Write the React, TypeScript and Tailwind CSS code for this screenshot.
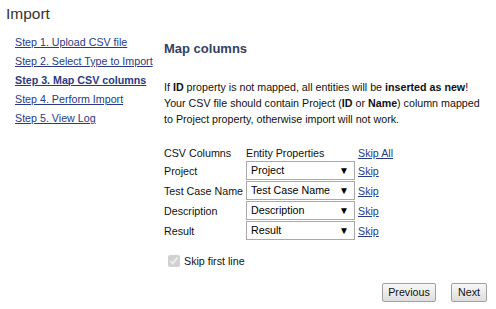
const steps = [
  { label: "Step 1. Upload CSV file" },
  { label: "Step 2. Select Type to Import" },
  { label: "Step 3. Map CSV columns", current: true },
  { label: "Step 4. Perform Import" },
  { label: "Step 5. View Log" },
];

const rows = [
  { column: "Project", property: "Project" },
  { column: "Test Case Name", property: "Test Case Name" },
  { column: "Description", property: "Description" },
  { column: "Result", property: "Result" },
];

function FakeSelect({ value }: { value: string }) {
  return (
    <div className="flex h-[19px] w-[109px] items-center justify-between border border-[#a9a9a9] bg-white pl-[4px] pr-[5px] text-black">
      <span>{value}</span>
      <span className="text-[10px] leading-none">▼</span>
    </div>
  );
}

export default function App() {
  return (
    <div className="h-[309px] w-[496px] overflow-hidden whitespace-nowrap bg-white font-['Liberation_Sans',Arial,sans-serif] text-[10.7px] text-[#111]">
      <h1 className="h-[24px] pl-[6px] pt-[4px] text-[15.5px] leading-[20px] text-[#333]">Import</h1>

      <div className="flex">
        <ul className="w-[164px] shrink-0 pl-[15px] pt-[9px]">
          {steps.map((s) => (
            <li key={s.label} className="h-[19px] leading-[19px]">
              <a
                href="#"
                className={"text-[#2a3a86] underline " + (s.current ? "font-bold" : "")}
              >
                {s.label}
              </a>
            </li>
          ))}
        </ul>

        <div className="flex-1 pt-[17px]">
          <h2 className="text-[13px] font-bold leading-[16px] text-[#33405f]">Map columns</h2>

          <p className="mt-[22px] leading-[16px]">
            If <b>ID</b> property is not mapped, all entities will be <b>inserted as new</b>!
            <br />
            Your CSV file should contain Project (<b>ID</b> or <b>Name</b>) column mapped
            <br />
            to Project property, otherwise import will not work.
          </p>

          <div className="mt-[18px] grid grid-cols-[82px_112px_auto] items-center">
            <div className="h-[16px] leading-[16px]">CSV Columns</div>
            <div className="h-[16px] leading-[16px]">Entity Properties</div>
            <div className="h-[16px] leading-[16px]">
              <a href="#" className="text-[#2a3a86] underline">Skip All</a>
            </div>
            {rows.map((r) => (
              <div key={r.column} className="contents">
                <div className="flex h-[20px] items-center">{r.column}</div>
                <div className="h-[20px]">
                  <FakeSelect value={r.property} />
                </div>
                <div className="flex h-[20px] items-center">
                  <a href="#" className="text-[#2a3a86] underline">Skip</a>
                </div>
              </div>
            ))}
          </div>

          <div className="mt-[12px] flex h-[16px] items-center gap-[4px] pl-[4px]">
            <input
              type="checkbox"
              defaultChecked
              disabled
              className="m-0 h-[12px] w-[12px]"
            />
            <span className="text-[#111]">Skip first line</span>
          </div>

          <div className="mt-[14px] flex justify-end gap-[15px] pr-[9px]">
            <button className="h-[19px] w-[54px] rounded-[2px] border border-[#a0a0a0] bg-gradient-to-b from-[#f8f8f8] to-[#dedede] text-[10.7px] text-[#111]">
              Previous
            </button>
            <button className="h-[19px] w-[36px] rounded-[2px] border border-[#a0a0a0] bg-gradient-to-b from-[#f8f8f8] to-[#dedede] text-[10.7px] text-[#111]">
              Next
            </button>
          </div>
        </div>
      </div>
    </div>
  );
}
